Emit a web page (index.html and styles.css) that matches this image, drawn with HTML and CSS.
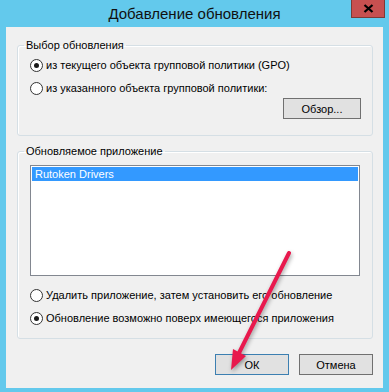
FILE: index.html
```html
<!DOCTYPE html>
<html lang="ru">
<head>
    <meta charset="UTF-8">
    <title>Добавление обновления</title>
    <link rel="stylesheet" href="styles.css">
</head>
<body>
    <div class="window">
        <div class="titlebar">
            <span class="title">Добавление обновления</span>
            <button type="button" class="close" aria-label="Закрыть">
                <svg width="11" height="9" viewBox="0 0 11 9">
                    <path d="M1.5 1 L9.5 8 M9.5 1 L1.5 8" stroke="#000" stroke-width="2.3" fill="none"/>
                </svg>
            </button>
        </div>

        <div class="client">
            <!-- Where the update comes from -->
            <fieldset class="group group-source">
                <legend>Выбор обновления</legend>
                <label class="option first"><span class="radio checked"></span>из текущего объекта групповой политики (GPO)</label>
                <label class="option"><span class="radio"></span>из указанного объекта групповой политики:</label>
                <div class="browse-row">
                    <button type="button" class="btn">Обзор...</button>
                </div>
            </fieldset>

            <!-- Application to upgrade -->
            <fieldset class="group group-app">
                <legend>Обновляемое приложение</legend>
                <div class="listbox">
                    <div class="list-item selected">Rutoken Drivers</div>
                </div>
                <label class="option spaced"><span class="radio"></span>Удалить приложение, затем установить его обновление</label>
                <label class="option"><span class="radio checked"></span>Обновление возможно поверх имеющегося приложения</label>
            </fieldset>

            <div class="actions">
                <button type="button" class="btn btn-default">ОК</button>
                <button type="button" class="btn">Отмена</button>
            </div>
        </div>

        <!-- Annotation arrow pointing at OK -->
        <svg class="annotation" width="389" height="392" viewBox="0 0 389 392">
            <line x1="289" y1="253" x2="238" y2="355" stroke="#e8194d" stroke-width="4" stroke-linecap="round"/>
            <polygon points="231,370 233,349 246,356" fill="#e8194d"/>
        </svg>
    </div>
</body>
</html>
```

FILE: styles.css
```css
/* General styling */
body {
    margin: 0;
    background-color: #63c9ec;
    font-family: 'Liberation Sans', Arial, sans-serif;
    font-size: 11px;
    color: #000000;
}

.window {
    position: relative;
    width: 389px;
    height: 392px;
}

/* Title bar */
.titlebar {
    height: 27px;
    display: flex;
    align-items: center;
    justify-content: center;
}

.title {
    font-size: 15px;
    color: #111111;
    margin-top: -1px;
}

.close {
    position: absolute;
    top: 0;
    right: 4px;
    width: 34px;
    height: 18px;
    padding: 0;
    background-color: #c75050;
    border: 1px solid #7d3a36;
    border-top: none;
    display: flex;
    align-items: center;
    justify-content: center;
}

/* Dialog body */
.client {
    margin: 0 6px;
    height: 361px;
    box-sizing: border-box;
    background-color: #f0f0f0;
    padding: 11px 10px 0 11px;
}

.group {
    margin: 0;
    padding: 0 12px;
    border: 1px solid #d5dfe5;
    border-radius: 3px;
    box-shadow: inset 1px 1px 0 #ffffff;
}

.group legend {
    margin-left: -6px;
    padding: 0 2px;
    line-height: 15px;
}

.group-source {
    padding-bottom: 16px;
}

.group-app {
    margin-top: 8px;
    padding-bottom: 12px;
}

/* Radio options */
.option {
    display: flex;
    align-items: center;
    gap: 3px;
    height: 16px;
    margin-top: 7px;
}

.option.first {
    margin-top: 4px;
}

.option.spaced {
    margin-top: 11px;
}

.radio {
    position: relative;
    width: 13px;
    height: 13px;
    box-sizing: border-box;
    border: 1px solid #333333;
    border-radius: 50%;
    background-color: #ffffff;
}

.radio.checked::after {
    content: "";
    position: absolute;
    inset: 3px;
    border-radius: 50%;
    background-color: #1a1a1a;
}

.browse-row {
    display: flex;
    justify-content: flex-end;
    margin: 2px -1px 0 0;
}

/* List box */
.listbox {
    margin-top: 6px;
    height: 111px;
    box-sizing: border-box;
    border: 1px solid #828790;
    background-color: #ffffff;
    padding: 1px;
}

.list-item {
    height: 14px;
    line-height: 14px;
    padding-left: 3px;
}

.list-item.selected {
    background-color: #3399ff;
    color: #ffffff;
}

/* Buttons */
.btn {
    width: 78px;
    height: 21px;
    padding: 0;
    font-family: inherit;
    font-size: 11px;
    color: #000000;
    background-color: #e1e1e1;
    border: 1px solid #707070;
}

.actions {
    display: flex;
    justify-content: flex-end;
    gap: 10px;
    margin-top: 15px;
}

.actions .btn {
    width: 74px;
}

.btn-default {
    border-color: #3c7fb1;
}

.annotation {
    position: absolute;
    top: 0;
    left: 0;
    pointer-events: none;
    filter: drop-shadow(1px 2px 2px rgba(0, 0, 0, 0.35));
}
```
